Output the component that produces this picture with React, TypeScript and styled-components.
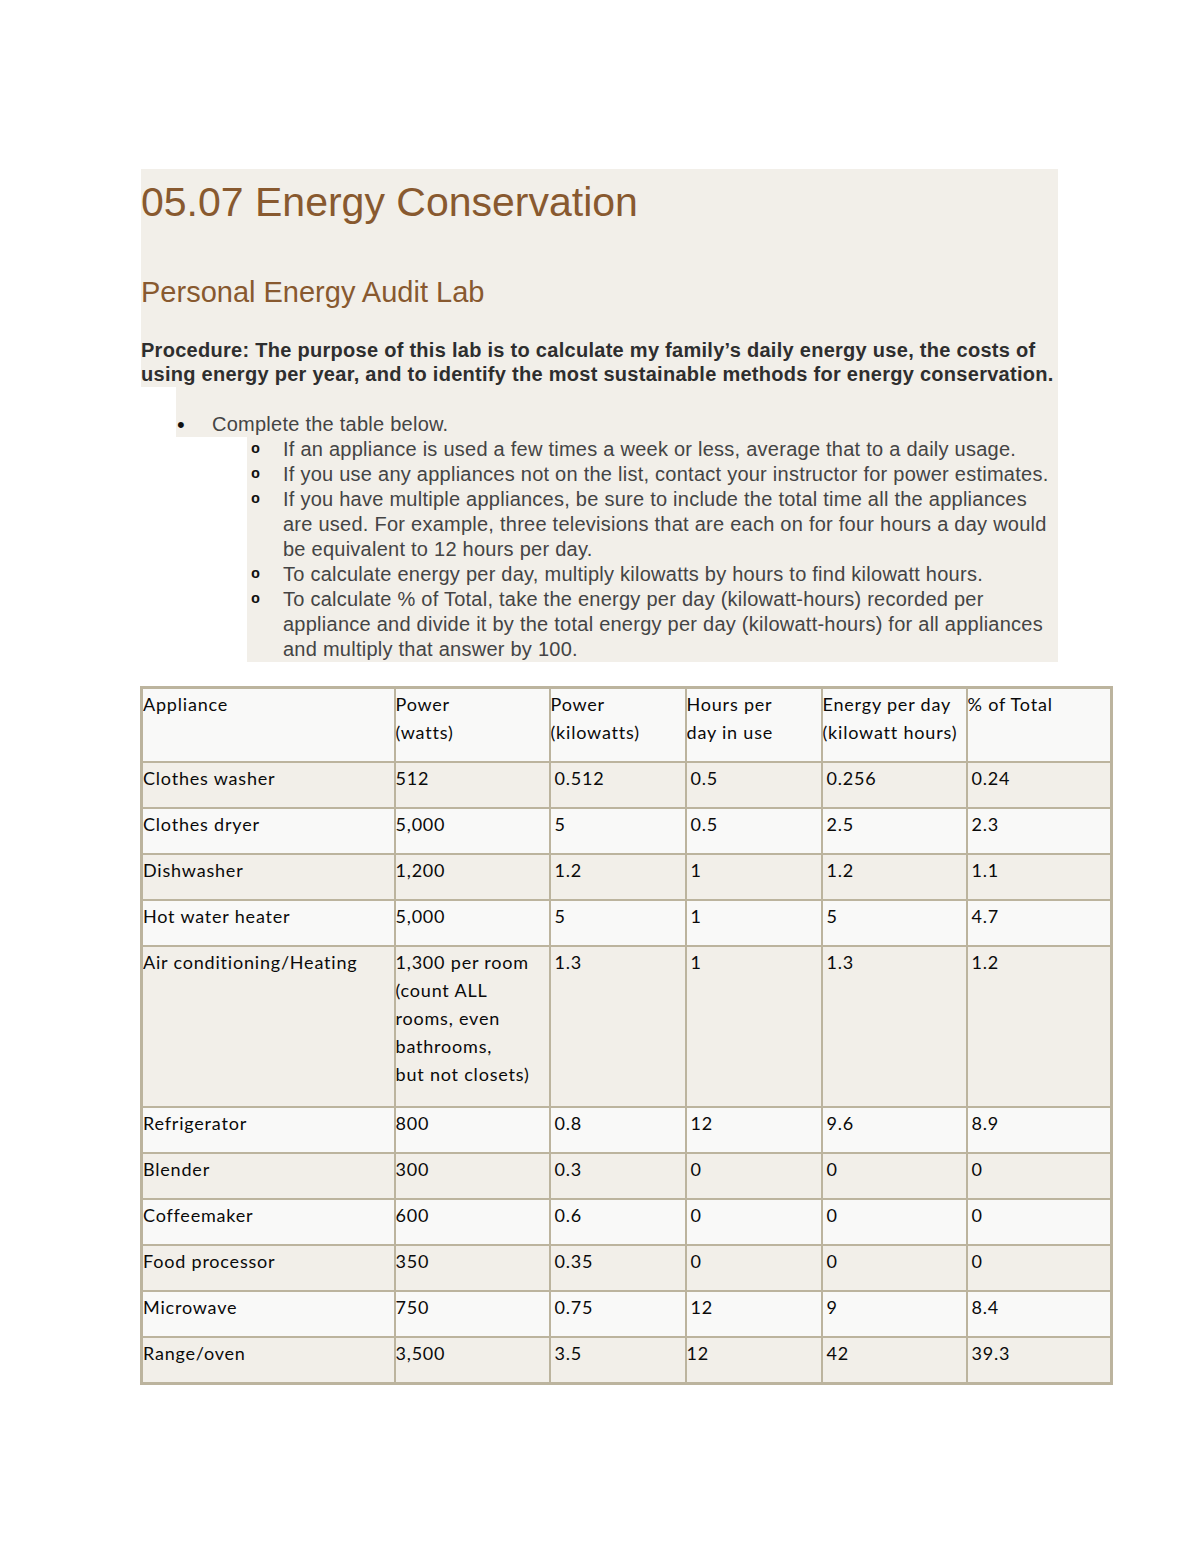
import React from 'react';
import styled, {createGlobalStyle} from 'styled-components';

const GlobalStyle = createGlobalStyle`
    html, body {
        margin: 0;
        padding: 0;
        background: #ffffff;
    }
`;

const BROWN = '#88592f';
const BEIGE = '#f2efe9';
const RULE = '#bcb49e';

const Page = styled.div`
    width: 1200px;
    min-height: 1553px;
    box-sizing: border-box;
    padding: 169px 0 0 141px;
    background: #ffffff;
    font-family: "Liberation Sans", Arial, sans-serif;
`;

const IntroBlock = styled.div`
    width: 917px;
    background: ${BEIGE};
    padding: 9px 0 1px;
`;

const Title = styled.h1`
    margin: 0;
    font-size: 41px;
    line-height: 48px;
    font-weight: normal;
    color: ${BROWN};
`;

const Subtitle = styled.h2`
    margin: 49px 0 0;
    font-size: 29px;
    line-height: 34px;
    font-weight: normal;
    color: ${BROWN};
`;

const Procedure = styled.p`
    margin: 29px 0 0;
    font-size: 20px;
    line-height: 24px;
    font-weight: bold;
    color: #2e2e2e;
    letter-spacing: 0.28px;
    white-space: nowrap;
`;

const BulletRow = styled.div`
    margin-left: 35px;
    width: 882px;
    height: 50px;
    box-sizing: border-box;
    padding-top: 25px;
    background: ${BEIGE};
    display: flex;
    font-size: 20px;
    line-height: 25px;
    letter-spacing: 0.25px;
    color: #444;
`;

const Marker = styled.span<{$sub?: boolean}>`
    flex: 0 0 36px;
    padding-left: ${p => (p.$sub ? '4px' : '1px')};
    box-sizing: border-box;
    font-family: ${p => (p.$sub ? '"Liberation Mono", monospace' : '"Liberation Sans", Arial, sans-serif')};
    font-size: ${p => (p.$sub ? '15px' : '22px')};
    font-weight: ${p => (p.$sub ? 'bold' : 'normal')};
    color: #111;
`;

const SubList = styled.ul`
    list-style: none;
    margin: 0 0 0 106px;
    padding: 0;
    width: 811px;
    background: ${BEIGE};
`;

const SubItem = styled.li`
    display: flex;
    font-size: 20px;
    line-height: 25px;
    letter-spacing: 0.25px;
    color: #444;
`;

const SubText = styled.span`
    white-space: nowrap;
`;

const Table = styled.table`
    margin: 24px 0 0 -1px;
    border-collapse: collapse;
    table-layout: fixed;
    width: 970px;
    border: 3px solid ${RULE};
    font-family: Lato, "Open Sans", sans-serif;
    font-size: 18px;
    line-height: 28px;
    letter-spacing: 0.8px;
    color: #0a0a0a;
`;

const Row = styled.tr<{$shade: boolean}>`
    background: ${p => (p.$shade ? BEIGE : '#f9f9f8')};
`;

const Cell = styled.td<{$tall?: boolean, $indent?: boolean}>`
    border: 2px solid ${RULE};
    padding: 1px 0 ${p => (p.$tall ? '18px' : '15px')} ${p => (p.$indent ? '4px' : '0')};
    vertical-align: top;
    white-space: nowrap;
    overflow: hidden;
`;

const widths = [253, 155, 136, 136, 145, 145];

const header = [
    ['Appliance'],
    ['Power', '(watts)'],
    ['Power', '(kilowatts)'],
    ['Hours per', 'day in use'],
    ['Energy per day', '(kilowatt hours)'],
    ['% of Total'],
];

const rows: string[][][] = [
    [['Clothes washer'], ['512'], ['0.512'], ['0.5'], ['0.256'], ['0.24']],
    [['Clothes dryer'], ['5,000'], ['5'], ['0.5'], ['2.5'], ['2.3']],
    [['Dishwasher'], ['1,200'], ['1.2'], ['1'], ['1.2'], ['1.1']],
    [['Hot water heater'], ['5,000'], ['5'], ['1'], ['5'], ['4.7']],
    [
        ['Air conditioning/Heating'],
        ['1,300 per room', '(count ALL', 'rooms, even', 'bathrooms,', 'but not closets)'],
        ['1.3'], ['1'], ['1.3'], ['1.2'],
    ],
    [['Refrigerator'], ['800'], ['0.8'], ['12'], ['9.6'], ['8.9']],
    [['Blender'], ['300'], ['0.3'], ['0'], ['0'], ['0']],
    [['Coffeemaker'], ['600'], ['0.6'], ['0'], ['0'], ['0']],
    [['Food processor'], ['350'], ['0.35'], ['0'], ['0'], ['0']],
    [['Microwave'], ['750'], ['0.75'], ['12'], ['9'], ['8.4']],
    [['Range/oven'], ['3,500'], ['3.5'], ['12'], ['42'], ['39.3']],
];

const subItems = [
    ['If an appliance is used a few times a week or less, average that to a daily usage.'],
    ['If you use any appliances not on the list, contact your instructor for power estimates.'],
    [
        'If you have multiple appliances, be sure to include the total time all the appliances',
        'are used. For example, three televisions that are each on for four hours a day would',
        'be equivalent to 12 hours per day.',
    ],
    ['To calculate energy per day, multiply kilowatts by hours to find kilowatt hours.'],
    [
        'To calculate % of Total, take the energy per day (kilowatt-hours) recorded per',
        'appliance and divide it by the total energy per day (kilowatt-hours) for all appliances',
        'and multiply that answer by 100.',
    ],
];

const Lines = ({lines}: {lines: string[]}) => (
    <>
        {lines.map((l, i) => (
            <React.Fragment key={i}>
                {i > 0 && <br/>}
                {l}
            </React.Fragment>
        ))}
    </>
);

const App = () => {
    return (
        <Page>
            <GlobalStyle/>
            <IntroBlock>
                <Title>{'05.07 Energy Conservation'}</Title>
                <Subtitle>{'Personal Energy Audit Lab'}</Subtitle>
                <Procedure>
                    <Lines
                        lines={[
                            'Procedure: The purpose of this lab is to calculate my family\u2019s daily energy use, the costs of',
                            'using energy per year, and to identify the most sustainable methods for energy conservation.',
                        ]}
                    />
                </Procedure>
            </IntroBlock>
            <BulletRow>
                <Marker>{'\u2022'}</Marker>
                <span>{'Complete the table below.'}</span>
            </BulletRow>
            <SubList>
                {subItems.map((lines, i) => (
                    <SubItem key={i}>
                        <Marker $sub={true}>{'o'}</Marker>
                        <SubText>
                            <Lines lines={lines}/>
                        </SubText>
                    </SubItem>
                ))}
            </SubList>
            <Table>
                <colgroup>
                    {widths.map((w, i) => (
                        <col
                            key={i}
                            style={{width: w}}
                        />
                    ))}
                </colgroup>
                <tbody>
                    <Row $shade={false}>
                        {header.map((h, i) => (
                            <Cell key={i}>
                                <Lines lines={h}/>
                            </Cell>
                        ))}
                    </Row>
                    {rows.map((r, i) => (
                        <Row
                            key={i}
                            $shade={i % 2 === 0}
                        >
                            {r.map((c, j) => (
                                <Cell
                                    key={j}
                                    $tall={c.length > 1}
                                    $indent={j >= 2 && !(i === rows.length - 1 && j === 3)}
                                >
                                    <Lines lines={c}/>
                                </Cell>
                            ))}
                        </Row>
                    ))}
                </tbody>
            </Table>
        </Page>
    );
};

export default App;
